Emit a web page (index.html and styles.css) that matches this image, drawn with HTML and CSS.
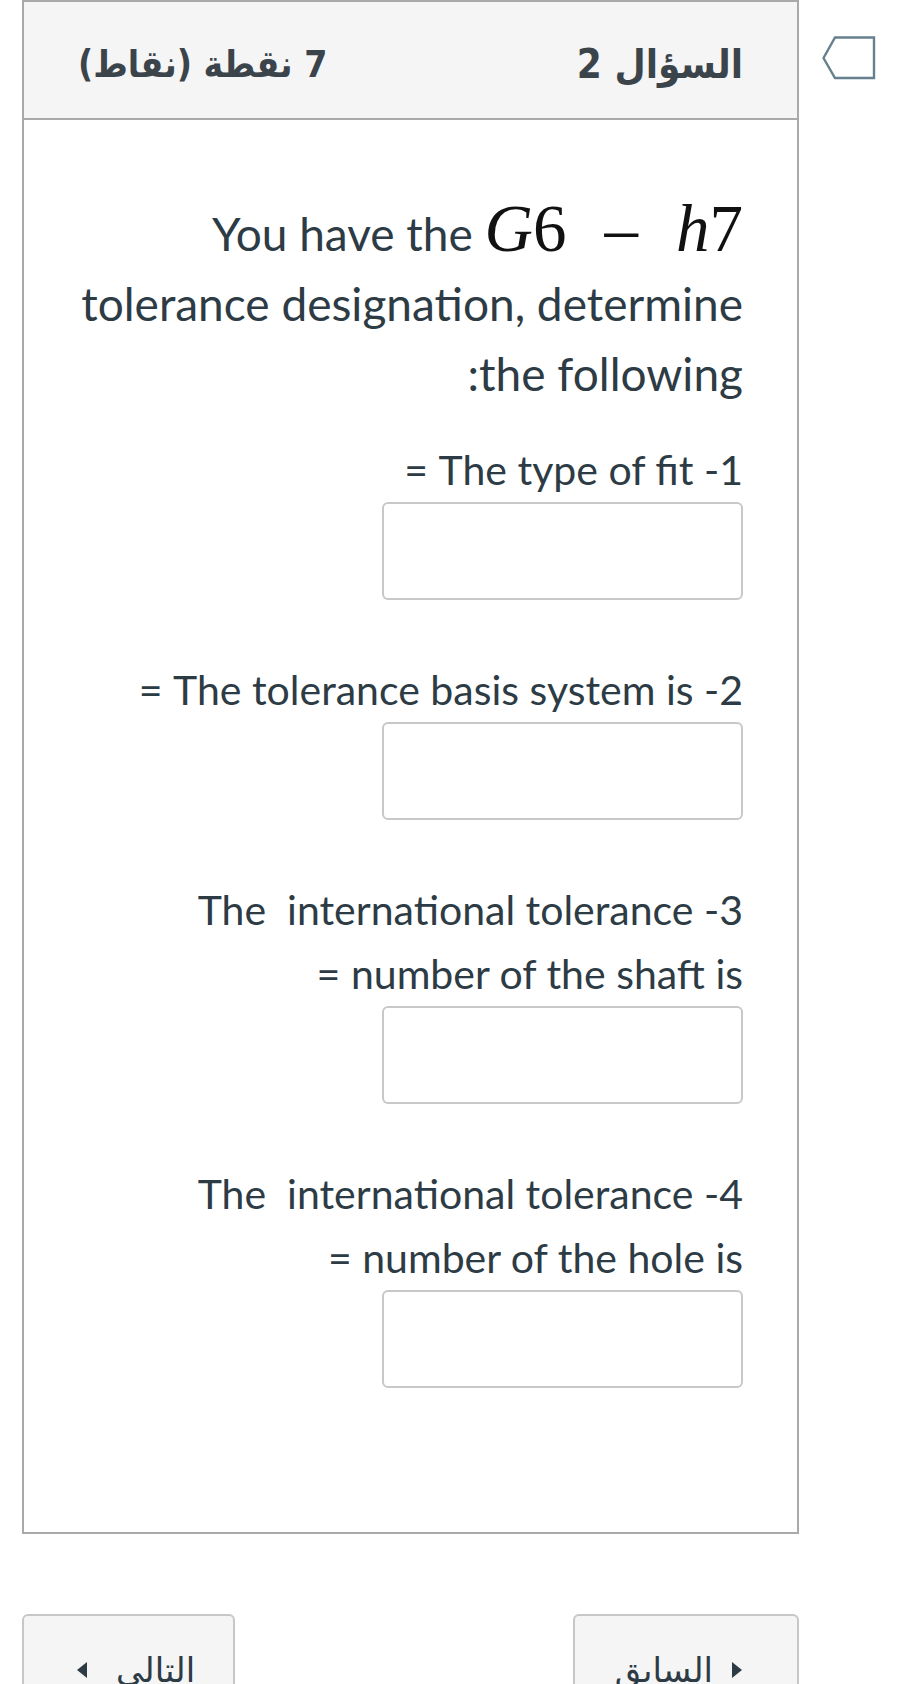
FILE: index.html
```html
<!DOCTYPE html>
<html lang="ar">
<head>
<meta charset="utf-8">
<title>السؤال 2</title>
<link rel="stylesheet" href="styles.css">
</head>
<body>
<div class="page">
  <div class="row">
    <div class="question" dir="rtl">
      <div class="q-header">
        <span class="q-title">السؤال 2</span>
        <span class="q-points">7 نقطة (نقاط)</span>
      </div>
      <div class="q-body">
        <p class="intro">You have the <span class="math"><i>G</i>6<span class="op">–</span><i>h</i>7</span><br>tolerance designation, determine<br>the following:</p>
        <div class="field first">
          <div class="label">1- The type of fit =</div>
          <input class="answer" type="text">
        </div>
        <div class="field">
          <div class="label">2- The tolerance basis system is =</div>
          <input class="answer" type="text">
        </div>
        <div class="field">
          <div class="label">3- The&nbsp; international tolerance<br>number of the shaft is =</div>
          <input class="answer" type="text">
        </div>
        <div class="field">
          <div class="label">4- The&nbsp; international tolerance<br>number of the hole is =</div>
          <input class="answer" type="text">
        </div>
      </div>
    </div>
    <svg class="flag" width="54" height="44" viewBox="0 0 54 44" aria-hidden="true">
      <polygon points="1.5,22 13,1.5 52,1.5 52,42 13,42" fill="#fff" stroke="#66808e" stroke-width="2.4" stroke-linejoin="miter"/>
    </svg>
  </div>
  <div class="nav" dir="rtl">
    <button class="btn btn-prev" type="button">
      <svg class="arrow" width="12" height="18" viewBox="0 0 12 18" aria-hidden="true"><polygon points="1,1 11,9 1,17" fill="#2d3b45"/></svg>
      <span>السابق</span>
    </button>
    <button class="btn btn-next" type="button">
      <span>التالي</span>
      <svg class="arrow" width="12" height="18" viewBox="0 0 12 18" aria-hidden="true"><polygon points="11,1 1,9 11,17" fill="#2d3b45"/></svg>
    </button>
  </div>
</div>
</body>
</html>
```

FILE: styles.css
```css
html, body {
  margin: 0;
  padding: 0;
  background: #ffffff;
}

body {
  font-family: Lato, "DejaVu Sans", sans-serif;
  color: #2d3b45;
}

.page {
  padding-left: 22px;
  display: flex;
  flex-direction: column;
}

.row {
  display: flex;
  align-items: flex-start;
  gap: 23px;
}

.question {
  width: 777px;
  box-sizing: border-box;
  border: 2px solid #a9a9a9;
  background: #ffffff;
}

.q-header {
  height: 118px;
  box-sizing: border-box;
  background: #f5f5f5;
  border-bottom: 2px solid #a9a9a9;
  display: flex;
  align-items: center;
  justify-content: space-between;
  padding: 8px 54px 0;
  font-family: "DejaVu Sans Condensed", "DejaVu Sans", sans-serif;
  font-weight: bold;
  font-size: 40px;
  color: #3b444b;
}

.q-points {
  font-size: 37px;
}

.q-body {
  padding: 79px 54px 144px;
}

.intro {
  margin: 0;
  font-size: 46px;
  line-height: 70px;
}

.math {
  font-family: "Liberation Serif", "Times New Roman", serif;
  font-size: 67px;
  line-height: 0;
  color: #111111;
}

.math i {
  font-style: italic;
}

.op {
  margin: 0 38px;
  font-style: normal;
}

.field {
  margin-top: 58px;
}

.field.first {
  margin-top: 29px;
}

.label {
  font-size: 41px;
  line-height: 64px;
}

.answer {
  display: block;
  width: 361px;
  height: 98px;
  box-sizing: border-box;
  margin: 0;
  border: 2px solid #c8c8c8;
  border-radius: 6px;
  background: #ffffff;
}

.flag {
  margin-top: 36px;
  flex: none;
}

.nav {
  width: 777px;
  margin-top: 80px;
  display: flex;
  justify-content: space-between;
}

.btn {
  height: 120px;
  box-sizing: border-box;
  display: flex;
  align-items: flex-start;
  gap: 28px;
  padding-top: 34px;
  background: #f5f5f5;
  border: 2px solid #c7c7c7;
  border-radius: 6px;
  font-family: "DejaVu Sans", sans-serif;
  font-size: 34px;
  line-height: 40px;
  color: #2d3b45;
}

.btn .arrow {
  margin-top: 11px;
}

.btn-prev {
  gap: 18px;
  padding-right: 54px;
  padding-left: 40px;
}

.btn-next {
  padding-right: 38px;
  padding-left: 52px;
}
```
